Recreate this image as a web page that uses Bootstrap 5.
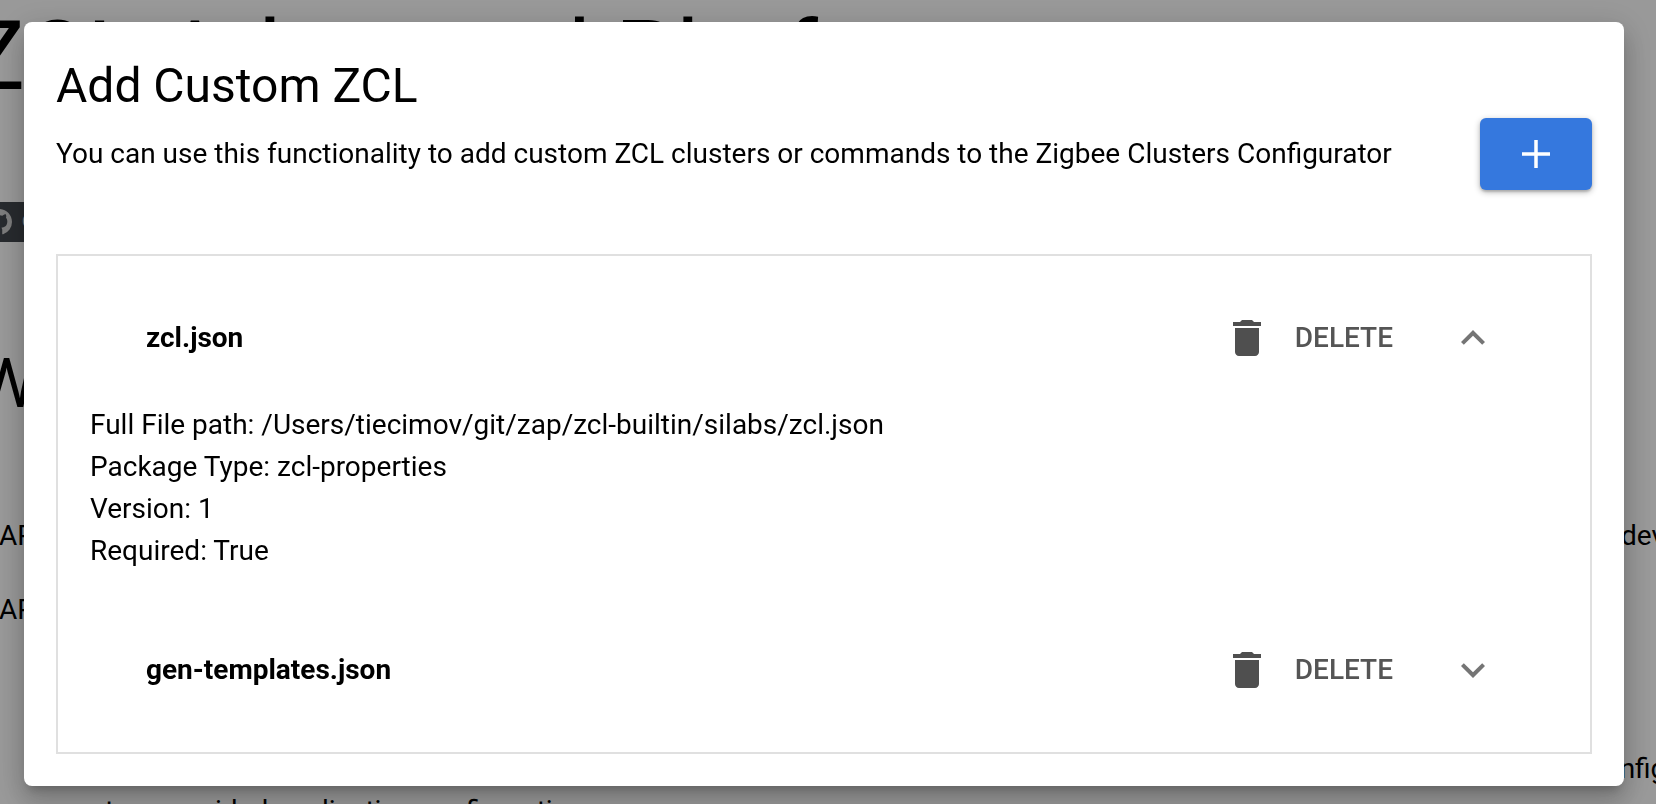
<!DOCTYPE html>
<html lang="en">
<head>
<meta charset="utf-8">
<title>Add Custom ZCL</title>
<link rel="stylesheet" href="https://cdn.jsdelivr.net/npm/bootstrap@5.3.0/dist/css/bootstrap.min.css">
<style>
html,body{height:100%;overflow:hidden}
body{font-family:Roboto,"Liberation Sans",sans-serif;background:#fff;color:#000}
.docpage{width:1656px;height:804px;overflow:hidden;padding-top:6px}
.doc-title{font-family:Roboto,sans-serif;font-weight:400;font-size:97px;line-height:100px;margin:0 0 0 -33px;white-space:nowrap}
.doc-badge{display:flex;align-items:center;width:150px;height:40px;margin:96px 0 0 -14px;background:#42474d;color:#ddd;gap:10px}
.doc-sub{font-weight:400;font-size:68px;line-height:70px;margin:107px 0 0 -24px;white-space:nowrap}
.doc-line{font-size:28px;line-height:42px;white-space:nowrap;margin:0}
.doc-spread{display:flex;justify-content:space-between;width:1780px;margin-left:-18px}
.doc-spread>span:last-child{width:141px}
.doc-l1{margin-top:96px}
.doc-l2{margin-top:32px}
.doc-l3{margin-top:117px}
.doc-l3.doc-spread>span:last-child{width:173px}
.doc-l4{padding-left:20px}
.scrim{position:fixed;inset:0;background:rgba(0,0,0,.4);padding:22px 0 0 24px}
.dialog-box{width:1600px;height:764px;background:#fff;border-radius:8px;padding:32px;box-shadow:0 8px 10px -5px rgba(0,0,0,.2),0 16px 24px 2px rgba(0,0,0,.14),0 6px 30px 5px rgba(0,0,0,.12)}
.dialog-title{font-size:48px;line-height:60px;font-weight:400;margin:2px 0 0}
.dialog-intro{height:72px;margin-top:2px}
.dialog-intro p{font-size:28px;line-height:36px;margin:0}
.add-btn{width:112px;height:72px;padding:0;background:#3578de;border:0;border-radius:6px;display:flex;align-items:center;justify-content:center;box-shadow:0 2px 6px rgba(0,0,0,.3),0 2px 2px rgba(0,0,0,.14)}
.add-btn:hover{background:#3578de}
.pkg-box{height:500px;margin-top:64px;border:2px solid #e0e0e0;padding:16px 0}
.pkg-row{height:132px;padding-left:88px}
.pkg-name{font-size:28px;font-weight:700}
.pkg-del{padding:0;border:0;background:none;color:#555;font-size:28px;font-weight:500;line-height:48px;display:flex;align-items:center;gap:24px}
.pkg-chev{margin:0 93px 0 56px}
.pkg-detail{padding:0 0 32px 32px;font-size:28px;line-height:42px}
</style>
</head>
<body>
<div class="docpage">
  <h1 class="doc-title">ZCL Advanced Platform</h1>
  <div class="doc-badge">
    <svg width="26" height="26" viewBox="0 0 16 16" fill="#d0d0d0"><path d="M8 0C3.58 0 0 3.58 0 8c0 3.54 2.29 6.53 5.47 7.59.4.07.55-.17.55-.38 0-.19-.01-.82-.01-1.49-2.01.37-2.53-.49-2.69-.94-.09-.23-.48-.94-.82-1.13-.28-.15-.68-.52-.01-.53.63-.01 1.08.58 1.23.82.72 1.21 1.87.87 2.33.66.07-.52.28-.87.51-1.07-1.78-.2-3.64-.89-3.64-3.95 0-.87.31-1.59.82-2.15-.08-.2-.36-1.02.08-2.12 0 0 .67-.21 2.2.82.64-.18 1.32-.27 2-.27s1.36.09 2 .27c1.53-1.04 2.2-.82 2.2-.82.44 1.1.16 1.92.08 2.12.51.56.82 1.27.82 2.15 0 3.07-1.87 3.75-3.65 3.95.29.25.54.73.54 1.48 0 1.07-.01 1.93-.01 2.2 0 .21.15.46.55.38A8.01 8.01 0 0 0 16 8c0-4.42-3.58-8-8-8z"/></svg>
    <span>CI</span>
  </div>
  <h2 class="doc-sub">What is ZAP?</h2>
  <p class="doc-line doc-l1 doc-spread"><span>ZAP is a generic generation engine and a set of tools for</span><span>developers</span></p>
  <p class="doc-line doc-l2 doc-spread"><span>ZAP allows you to</span><span></span></p>
  <p class="doc-line doc-l3 doc-spread"><span></span><span>configuration</span></p>
  <p class="doc-line doc-l4">generators provided application configuration</p>
</div>

<div class="scrim">
  <div class="dialog-box">
    <h4 class="dialog-title">Add Custom ZCL</h4>
    <div class="dialog-intro d-flex justify-content-between align-items-center">
      <p>You can use this functionality to add custom ZCL clusters or commands to the Zigbee Clusters Configurator</p>
      <button type="button" class="btn add-btn" aria-label="Add">
        <svg width="48" height="48" viewBox="0 0 24 24" fill="#fff"><path d="M19 12.875h-6.125V19h-1.75v-6.125H5v-1.75h6.125V5h1.75v6.125H19z"/></svg>
      </button>
    </div>
    <div class="pkg-box">
      <div class="pkg-row d-flex align-items-center">
        <div class="pkg-name flex-grow-1">zcl.json</div>
        <button type="button" class="btn pkg-del">
          <svg width="48" height="48" viewBox="0 0 24 24" fill="#4f4f4f"><path d="M6 19c0 1.1.9 2 2 2h8c1.1 0 2-.9 2-2V7H6v12zM19 4h-3.5l-1-1h-5l-1 1H5v2h14V4z"/></svg>
          <span>DELETE</span>
        </button>
        <svg class="pkg-chev" width="48" height="48" viewBox="0 0 24 24" fill="#757575"><path d="M12 8l-6 6 1.41 1.41L12 10.83l4.59 4.58L18 14z"/></svg>
      </div>
      <div class="pkg-detail">
        <div>Full File path: /Users/tiecimov/git/zap/zcl-builtin/silabs/zcl.json</div>
        <div>Package Type: zcl-properties</div>
        <div>Version: 1</div>
        <div>Required: True</div>
      </div>
      <div class="pkg-row d-flex align-items-center">
        <div class="pkg-name flex-grow-1">gen-templates.json</div>
        <button type="button" class="btn pkg-del">
          <svg width="48" height="48" viewBox="0 0 24 24" fill="#4f4f4f"><path d="M6 19c0 1.1.9 2 2 2h8c1.1 0 2-.9 2-2V7H6v12zM19 4h-3.5l-1-1h-5l-1 1H5v2h14V4z"/></svg>
          <span>DELETE</span>
        </button>
        <svg class="pkg-chev" width="48" height="48" viewBox="0 0 24 24" fill="#757575"><path d="M16.59 8.59L12 13.17 7.41 8.59 6 10l6 6 6-6z"/></svg>
      </div>
    </div>
  </div>
</div>
<script src="https://cdn.jsdelivr.net/npm/bootstrap@5.3.0/dist/js/bootstrap.bundle.min.js"></script>
</body>
</html>
